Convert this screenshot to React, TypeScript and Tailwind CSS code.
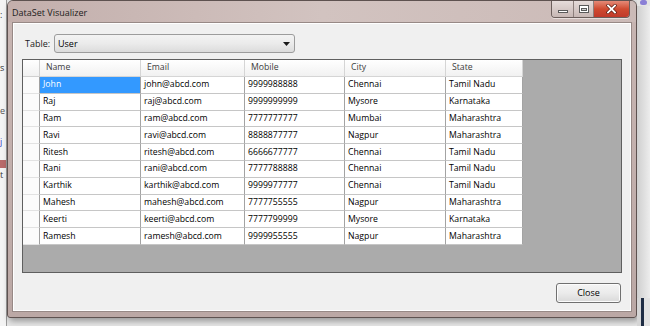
import React from "react";

const columns = [
  { name: "Name", w: "w-[101px]" },
  { name: "Email", w: "w-[104px]" },
  { name: "Mobile", w: "w-[100px]" },
  { name: "City", w: "w-[101px]" },
  { name: "State", w: "w-[77px]" },
];

const rows = [
  ["John", "john@abcd.com", "9999988888", "Chennai", "Tamil Nadu"],
  ["Raj", "raj@abcd.com", "9999999999", "Mysore", "Karnataka"],
  ["Ram", "ram@abcd.com", "7777777777", "Mumbai", "Maharashtra"],
  ["Ravi", "ravi@abcd.com", "8888877777", "Nagpur", "Maharashtra"],
  ["Ritesh", "ritesh@abcd.com", "6666677777", "Chennai", "Tamil Nadu"],
  ["Rani", "rani@abcd.com", "7777788888", "Chennai", "Tamil Nadu"],
  ["Karthik", "karthik@abcd.com", "9999977777", "Chennai", "Tamil Nadu"],
  ["Mahesh", "mahesh@abcd.com", "7777755555", "Nagpur", "Maharashtra"],
  ["Keerti", "keerti@abcd.com", "7777799999", "Mysore", "Karnataka"],
  ["Ramesh", "ramesh@abcd.com", "9999955555", "Nagpur", "Maharashtra"],
];

const CaptionButtons = () => (
  <div className="flex mr-[6px] h-[17px] rounded-b-[4px] border border-t-0 border-[#6b5e5b] overflow-hidden shadow-[0_1px_0_#e8dedc]">
    <div className="w-[22px] flex items-end justify-center pb-[4px] bg-gradient-to-b from-[#e6dcda] to-[#c7b7b4] border-r border-[#8d7f7c]">
      <div className="w-[10px] h-[3px] bg-white border border-[#5a5a5a]" />
    </div>
    <div className="w-[20px] flex items-center justify-center bg-gradient-to-b from-[#e6dcda] to-[#c7b7b4] border-r border-[#8d7f7c]">
      <div className="w-[10px] h-[8px] bg-white border border-[#5a5a5a] flex items-center justify-center">
        <div className="w-[6px] h-[3px] border border-[#5a5a5a] bg-[#d0d0d0]" />
      </div>
    </div>
    <div className="w-[35px] flex items-center justify-center bg-gradient-to-b from-[#e48a77] via-[#cf4a30] to-[#c0392a]">
      <svg width="11" height="10" viewBox="0 0 11 10">
        <path d="M2 1.5 L9 8.5 M9 1.5 L2 8.5" stroke="#5a1a10" strokeWidth="3.2" strokeLinecap="square" />
        <path d="M2 1.5 L9 8.5 M9 1.5 L2 8.5" stroke="#ffffff" strokeWidth="1.8" strokeLinecap="square" />
      </svg>
    </div>
  </div>
);

const DataGrid = () => (
  <div className="mt-[6px] ml-[9px] w-[600px] h-[214px] border border-[#5f5f5f] bg-[#ababab] flex flex-col">
    <div className="flex h-[17px]">
      <div className="w-[17px] border-r border-b border-[#d0d0d0] bg-gradient-to-b from-white to-[#f1f1f1]" />
      {columns.map((c) => (
        <div
          key={c.name}
          className={`${c.w} border-r border-b border-[#d5d5d5] bg-gradient-to-b from-white to-[#f1f1f1] flex items-center pl-[6px] text-[8.7px] text-[#3c3c3c]`}
        >
          {c.name}
        </div>
      ))}
    </div>
    {rows.map((r, i) => (
      <div key={r[0]} className="flex h-[16.8px]">
        <div className="w-[17px] border-r border-r-[#a0a0a0] border-b border-b-[#e2e2e2] bg-[#fbfbfb]" />
        {r.map((v, j) => (
          <div
            key={j}
            className={`${columns[j].w} border-r border-r-[#a3a3a3] border-b border-b-[#c6c6c6] flex items-center px-[3px] text-[8.7px] whitespace-nowrap overflow-hidden ${
              i === 0 && j === 0 ? "bg-[#3399ff] text-white" : "bg-white text-black"
            }`}
          >
            {v}
          </div>
        ))}
      </div>
    ))}
  </div>
);

export default function App() {
  return (
    <div className="w-[650px] h-[326px] flex bg-[#e6e6e6] overflow-hidden font-['Open_Sans',sans-serif]">
      {/* desktop behind, left side */}
      <div className="w-[7px] h-full bg-[#f4f4f4] border-r border-[#9a9a9a] flex flex-col text-[9px] leading-none overflow-hidden">
        <div className="mt-[10px] text-[#333]">:</div>
        <div className="mt-[44px] text-[#333]">s</div>
        <div className="mt-[34px] text-[#555]">e</div>
        <div className="mt-[22px] text-[#3b3bc8]">j</div>
        <div className="mt-[14px] h-[8px] w-[6px] bg-[#b86a6a]" />
        <div className="mt-[2px] text-[#333]">t</div>
      </div>

      {/* window */}
      <div className="w-[630px] h-[318px] flex flex-col rounded-t-[6px] rounded-b-[3px] border border-[#5e5250] bg-gradient-to-b from-[#c7b5b2] via-[#c3b0ad] to-[#bba8a5] shadow-[2px_3px_6px_rgba(0,0,0,0.35)]">
        <div className="h-[21px] flex items-start justify-between bg-gradient-to-r from-[#c3afac] via-[#d2c3c0] to-[#cbbab7] rounded-t-[5px]">
          <div className="pl-[4px] pt-[6px] text-[9px] leading-[12px] text-[#1b1b1b]">DataSet Visualizer</div>
          <CaptionButtons />
        </div>

        <div className="mx-[4px] h-[290px] bg-[#f0f0f0] border border-[#978986] shadow-[inset_0_0_0_1px_#ffffff] flex flex-col">
          <div className="mt-[11px] pl-[12px] flex items-center h-[19px]">
            <div className="w-[29px] text-[9px] text-[#1b1b1b]">Table:</div>
            <div className="w-[241px] h-[19px] rounded-[3px] border border-[#9c9c9c] bg-gradient-to-b from-[#f3f3f3] via-[#ebebeb] to-[#dcdcdc] flex items-center justify-between pl-[3px] pr-[4px]">
              <span className="text-[9px] text-black">User</span>
              <svg width="7" height="4" viewBox="0 0 7 4">
                <path d="M0 0 L7 0 L3.5 4 Z" fill="#1a1a1a" />
              </svg>
            </div>
          </div>

          <DataGrid />

          <div className="mt-[10px] self-end mr-[10px] w-[65px] h-[20px] rounded-[3px] border border-[#707070] bg-gradient-to-b from-[#f4f4f4] via-[#ebebeb] to-[#d9d9d9] shadow-[inset_0_0_0_1px_#fcfcfc] flex items-center justify-center text-[9px] text-black">
            Close
          </div>
        </div>
      </div>

      {/* desktop behind, right side */}
      <div className="flex-1 h-full flex flex-col bg-[#e4e4e4]">
        <div className="h-[6px] flex items-start pl-[3px]">
          <div className="w-[7px] h-[5px] rounded-full bg-[#8a7fd6]" />
        </div>
        <div className="flex-1 bg-gradient-to-r from-[#cfcfcf] to-[#ededed]" />
        <div className="h-[28px] flex">
          <div className="w-[4px] bg-[#d5d5d5]" />
          <div className="w-[3px] bg-[#1f2d44]" />
          <div className="flex-1 bg-[#e2e2e2]" />
        </div>
      </div>
    </div>
  );
}
